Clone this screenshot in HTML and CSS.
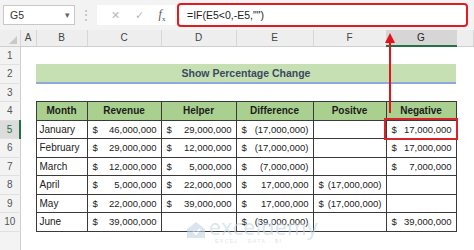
FILE: index.html
```html
<html>
<head>
  <meta charset="UTF-8">
  <title>Show Percentage Change</title>
  <link rel="stylesheet" href="styles.css">
</head>
<body>

  <div class="toolbar">
    <div class="nameBox">
      <span>G5</span>
      <span class="nameArrow">&#9662;</span>
    </div>
    <div class="grip">&#8942;</div>
    <div class="fxButtons">
      <span class="fxBtn">&#10005;</span>
      <span class="fxBtn">&#10003;</span>
      <span class="fxLabel"><i>f</i><sub>x</sub></span>
    </div>
    <div class="formulaBox">=IF(E5&lt;0,-E5,"")</div>
  </div>

  <div class="sheetWrap">
    <table class="sheet">
      <colgroup>
        <col class="colRh">
        <col class="colA">
        <col class="colB">
        <col class="colC">
        <col class="colD">
        <col class="colE">
        <col class="colF">
        <col class="colG">
        <col>
      </colgroup>
      <tr class="colHeads">
        <th class="corner"><span class="cornerMark"></span></th>
        <th>A</th><th>B</th><th>C</th><th>D</th><th>E</th><th>F</th>
        <th class="selCol">G</th><th></th>
      </tr>
      <tr class="r18">
        <th class="rh">1</th><td></td><td></td><td></td><td></td><td></td><td></td><td></td><td></td>
      </tr>
      <tr class="r19">
        <th class="rh">2</th><td></td>
        <td colspan="6" class="title">Show Percentage Change</td><td></td>
      </tr>
      <tr class="r18">
        <th class="rh">3</th><td></td><td></td><td></td><td></td><td></td><td></td><td></td><td></td>
      </tr>
      <tr class="r19">
        <th class="rh">4</th><td></td>
        <td class="head">Month</td>
        <td class="head">Revenue</td>
        <td class="head">Helper</td>
        <td class="head">Difference</td>
        <td class="head">Positve</td>
        <td class="head">Negative</td>
        <td></td>
      </tr>
      <tr class="r18">
        <th class="rh selRow">5</th><td></td>
        <td class="box month">January</td>
        <td class="box"><div class="acc"><span>$</span><span>46,000,000</span></div></td>
        <td class="box"><div class="acc"><span>$</span><span>29,000,000</span></div></td>
        <td class="box"><div class="acc"><span>$</span><span>(17,000,000)</span></div></td>
        <td class="box"></td>
        <td class="box active"><div class="acc"><span>$</span><span>17,000,000</span></div></td>
        <td></td>
      </tr>
      <tr class="r19">
        <th class="rh">6</th><td></td>
        <td class="box month">February</td>
        <td class="box"><div class="acc"><span>$</span><span>29,000,000</span></div></td>
        <td class="box"><div class="acc"><span>$</span><span>12,000,000</span></div></td>
        <td class="box"><div class="acc"><span>$</span><span>(17,000,000)</span></div></td>
        <td class="box"></td>
        <td class="box"><div class="acc"><span>$</span><span>17,000,000</span></div></td>
        <td></td>
      </tr>
      <tr class="r18">
        <th class="rh">7</th><td></td>
        <td class="box month">March</td>
        <td class="box"><div class="acc"><span>$</span><span>12,000,000</span></div></td>
        <td class="box"><div class="acc"><span>$</span><span>5,000,000</span></div></td>
        <td class="box"><div class="acc"><span>$</span><span>(7,000,000)</span></div></td>
        <td class="box"></td>
        <td class="box"><div class="acc"><span>$</span><span>7,000,000</span></div></td>
        <td></td>
      </tr>
      <tr class="r19">
        <th class="rh">8</th><td></td>
        <td class="box month">April</td>
        <td class="box"><div class="acc"><span>$</span><span>5,000,000</span></div></td>
        <td class="box"><div class="acc"><span>$</span><span>22,000,000</span></div></td>
        <td class="box"><div class="acc"><span>$</span><span>17,000,000</span></div></td>
        <td class="box"><div class="acc"><span>$</span><span>(17,000,000)</span></div></td>
        <td class="box"></td>
        <td></td>
      </tr>
      <tr class="r18">
        <th class="rh">9</th><td></td>
        <td class="box month">May</td>
        <td class="box"><div class="acc"><span>$</span><span>22,000,000</span></div></td>
        <td class="box"><div class="acc"><span>$</span><span>39,000,000</span></div></td>
        <td class="box"><div class="acc"><span>$</span><span>17,000,000</span></div></td>
        <td class="box"><div class="acc"><span>$</span><span>(17,000,000)</span></div></td>
        <td class="box"></td>
        <td></td>
      </tr>
      <tr class="r19">
        <th class="rh">10</th><td></td>
        <td class="box month">June</td>
        <td class="box"><div class="acc"><span>$</span><span>39,000,000</span></div></td>
        <td class="box"></td>
        <td class="box"><div class="acc"><span>$</span><span>(39,000,000)</span></div></td>
        <td class="box"></td>
        <td class="box"><div class="acc"><span>$</span><span>39,000,000</span></div></td>
        <td></td>
      </tr>
      <tr class="r19">
        <th class="rh"></th><td></td><td></td><td></td><td></td><td></td><td></td><td></td><td></td>
      </tr>
    </table>

    <!-- pointer from G5 up to the formula bar -->
    <svg class="pointer" width="16" height="80" viewBox="0 0 16 80">
      <line x1="8" y1="8" x2="8" y2="80" stroke="#e3121b" stroke-width="2"/>
      <polygon points="8,0 3,10 13,10" fill="#e3121b"/>
    </svg>

    <div class="watermark">
      <svg class="wmIcon" width="20" height="18" viewBox="0 0 20 18">
        <path d="M10 1 L19 8 L19 17 L1 17 L1 8 Z" fill="#c5d3e6"/>
        <path d="M7 10 L10 13 L14 8" stroke="#ffffff" stroke-width="2" fill="none"/>
      </svg>
      <div class="wmText">
        <div class="wmName">exceldemy</div>
        <div class="wmSub">EXCEL · DATA · BI</div>
      </div>
    </div>
  </div>

</body>
</html>
```

FILE: styles.css
```css
body {
  margin: 0;
  background: #ffffff;
  font-family: "Liberation Sans", Arial, sans-serif;
  width: 474px;
  height: 250px;
  overflow: hidden;
}
.toolbar {
  height: 30px;
  background: #f3f3f3;
  display: flex;
  flex-direction: row;
  align-items: center;
  padding: 0 6px 0 3px;
  box-sizing: border-box;
}
.nameBox {
  width: 72px;
  height: 20px;
  box-sizing: border-box;
  background: #ffffff;
  border: 1px solid #c8c8c8;
  display: flex;
  align-items: center;
  justify-content: space-between;
  padding: 0 4px 0 6px;
  font-size: 10.5px;
  color: #333;
}
.nameArrow {
  font-size: 9px;
  color: #666;
}
.grip {
  width: 22px;
  text-align: center;
  color: #b5b5b5;
  font-size: 12px;
}
.fxButtons {
  width: 78px;
  height: 20px;
  box-sizing: border-box;
  background: #ffffff;
  display: flex;
  align-items: center;
  justify-content: space-around;
  padding: 0 2px 0 6px;
}
.fxBtn {
  color: #b9b9b9;
  font-size: 11px;
}
.fxLabel {
  color: #555;
  font-family: "Liberation Serif", serif;
  font-size: 12px;
}
.fxLabel sub {
  font-size: 7px;
}
.formulaBox {
  margin-left: 2px;
  flex: 1;
  height: 24px;
  box-sizing: border-box;
  background: #ffffff;
  border: 2px solid #e01b22;
  border-radius: 4px;
  display: flex;
  align-items: center;
  padding-left: 8px;
  font-size: 10.5px;
  color: #222;
}
.sheetWrap {
  position: relative;
}
.sheet {
  border-collapse: collapse;
  table-layout: fixed;
  width: 474px;
  font-size: 9.5px;
  color: #222;
}
.colRh { width: 20px; }
.colA { width: 16px; }
.colB { width: 51px; }
.colC { width: 74px; }
.colD { width: 75px; }
.colE { width: 77px; }
.colF { width: 73px; }
.colG { width: 70px; }
.sheet td,
.sheet th {
  padding: 0;
  overflow: hidden;
  white-space: nowrap;
}
.colHeads th {
  height: 16px;
  background: #eeeeee;
  border-right: 1px solid #d6d6d6;
  border-bottom: 1px solid #cfcfcf;
  font-weight: normal;
  color: #444;
  font-size: 10px;
}
.colHeads .selCol {
  background: #d6d6d6;
  border-bottom: 2px solid #217346;
  color: #222;
}
.corner {
  position: relative;
}
.cornerMark {
  position: absolute;
  right: 3px;
  bottom: 2px;
  width: 0;
  height: 0;
  border-left: 8px solid transparent;
  border-bottom: 8px solid #c9c9c9;
}
.r18 { height: 18px; }
.r19 { height: 19px; }
.rh {
  background: #f3f3f3;
  border-right: 1px solid #cfcfcf;
  border-bottom: 1px solid #e0e0e0;
  font-weight: normal;
  color: #555;
  font-size: 10px;
}
.rh.selRow {
  background: #dcdcdc;
  border-right: 2px solid #217346;
  color: #217346;
}
.title {
  background: #c6e0b4;
  border-bottom: 2px solid #8ea9db;
  color: #3b4a5e;
  font-weight: bold;
  font-size: 10.5px;
  text-align: center;
}
.head {
  background: #a9d08e;
  border: 1px solid #3a3a3a;
  font-weight: bold;
  font-size: 10px;
  text-align: center;
  color: #1c1c1c;
}
.box {
  border: 1px solid #3a3a3a;
}
.month {
  padding-left: 3px !important;
  font-size: 10px;
}
.acc {
  display: flex;
  justify-content: space-between;
  padding: 0 4px 0 5px;
}
.active {
  outline: 2px solid #d9232b;
  outline-offset: 0;
}
.pointer {
  position: absolute;
  left: 382px;
  top: 3px;
}
.watermark {
  position: absolute;
  left: 186px;
  top: 186px;
  display: flex;
  align-items: center;
  gap: 3px;
  opacity: 0.6;
}
.wmName {
  font-family: "Open Sans", sans-serif;
  font-size: 21px;
  line-height: 22px;
  color: #c5d3e6;
  letter-spacing: 0.5px;
}
.wmSub {
  font-size: 5px;
  letter-spacing: 1.5px;
  color: #c5d3e6;
  padding-left: 6px;
}
```
